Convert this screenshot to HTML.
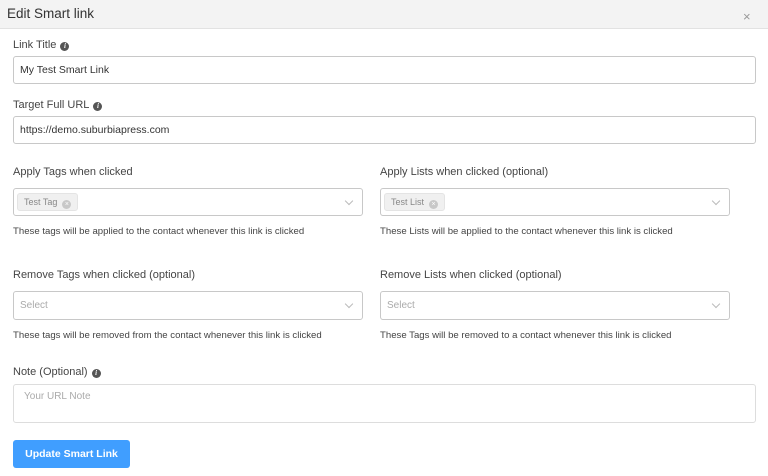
<!DOCTYPE html><html><head><style>
body{margin:0;width:768px;height:476px;background:#fff;font-family:"Liberation Sans",sans-serif;position:relative;overflow:hidden;color:#3a3a3a}
.a{position:absolute}
.hd{left:0;top:0;width:768px;height:28px;background:#f3f3f3;border-bottom:1px solid #e2e2e2}
.lbl{font-size:11px;color:#454545}
.inp{border:1px solid #c8c8c8;border-radius:3px;box-sizing:border-box;background:#fff}
.i{display:inline-block;width:9px;height:9px;border-radius:50%;background:#555;color:#fff;font-size:7px;font-weight:bold;text-align:center;line-height:9px;font-style:italic;vertical-align:0px;margin-left:4px;font-family:"Liberation Serif",serif}
.help{font-size:9.6px;color:#444}
.ph{font-size:10px;color:#aaa}
.chev{width:5px;height:5px;border-right:1px solid #bbb;border-bottom:1px solid #bbb;transform:rotate(45deg)}
.tag{background:#f0f0f0;border:1px solid #e4e4e4;border-radius:3px;font-size:9px;color:#888;height:16px;line-height:16px;padding:0 6px}
.x{display:inline-block;width:9px;height:9px;border-radius:50%;background:#c8c8c8;color:#fff;font-size:7px;line-height:9px;text-align:center;margin-left:5px;vertical-align:-1px}
</style></head><body>
<div class="a hd"></div>
<div class="a" style="left:7px;top:6px;font-size:13.5px;color:#333">Edit Smart link</div>
<div class="a" style="left:743px;top:9px;font-size:13px;color:#999">×</div>

<div class="a lbl" style="left:13px;top:39px">Link Title<span class="i">i</span></div>
<div class="a inp" style="left:13px;top:56px;width:743px;height:28px"></div>
<div class="a" style="left:20px;top:64px;font-size:10.5px;color:#333">My Test Smart Link</div>

<div class="a lbl" style="left:13px;top:99px">Target Full URL<span class="i">i</span></div>
<div class="a inp" style="left:13px;top:116px;width:743px;height:28px"></div>
<div class="a" style="left:20px;top:124px;font-size:10.5px;color:#333">https://demo.suburbiapress.com</div>

<div class="a lbl" style="left:13px;top:166px">Apply Tags when clicked</div>
<div class="a inp" style="left:13px;top:188px;width:350px;height:28px"></div>
<div class="a tag" style="left:17px;top:193px">Test Tag<span class="x">×</span></div>
<div class="a chev" style="left:346px;top:198px"></div>
<div class="a help" style="left:13px;top:226px">These tags will be applied to the contact whenever this link is clicked</div>

<div class="a lbl" style="left:380px;top:166px">Apply Lists when clicked (optional)</div>
<div class="a inp" style="left:380px;top:188px;width:350px;height:28px"></div>
<div class="a tag" style="left:384px;top:193px">Test List<span class="x">×</span></div>
<div class="a chev" style="left:713px;top:198px"></div>
<div class="a help" style="left:380px;top:226px">These Lists will be applied to the contact whenever this link is clicked</div>

<div class="a lbl" style="left:13px;top:269px">Remove Tags when clicked (optional)</div>
<div class="a inp" style="left:13px;top:291px;width:350px;height:29px"></div>
<div class="a ph" style="left:20px;top:300px">Select</div>
<div class="a chev" style="left:346px;top:301px"></div>
<div class="a help" style="left:13px;top:330px">These tags will be removed from the contact whenever this link is clicked</div>

<div class="a lbl" style="left:380px;top:269px">Remove Lists when clicked (optional)</div>
<div class="a inp" style="left:380px;top:291px;width:350px;height:29px"></div>
<div class="a ph" style="left:387px;top:300px">Select</div>
<div class="a chev" style="left:713px;top:301px"></div>
<div class="a help" style="left:380px;top:330px">These Tags will be removed to a contact whenever this link is clicked</div>

<div class="a lbl" style="left:13px;top:366px">Note (Optional)<span class="i">i</span></div>
<div class="a inp" style="left:13px;top:384px;width:743px;height:39px;border-color:#ddd"></div>
<div class="a ph" style="left:24px;top:391px">Your URL Note</div>

<div class="a" style="left:13px;top:440px;width:117px;height:28px;background:#409eff;border-radius:3px;color:#fff;font-size:10.5px;font-weight:bold;text-align:center;line-height:28px">Update Smart Link</div>
</body></html>
